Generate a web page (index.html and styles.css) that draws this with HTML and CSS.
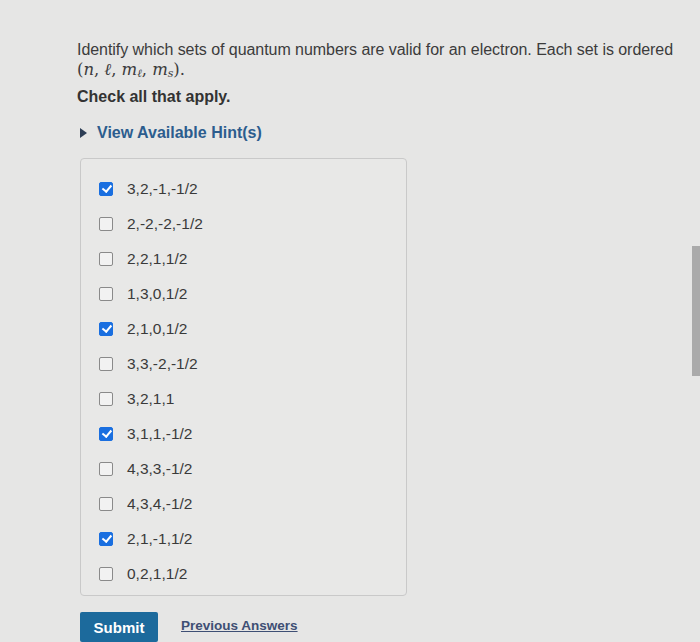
FILE: index.html
```html
<!DOCTYPE html>
<html>
<head>
<meta charset="utf-8">
<link rel="stylesheet" href="styles.css">
</head>
<body>
<div class="page">
  <div class="content">
    <p class="question">Identify which sets of quantum numbers are valid for an electron. Each set is ordered <span class="math">(<i>n</i>, <i>ℓ</i>, <i>m</i><sub><i>ℓ</i></sub>, <i>m</i><sub><i>s</i></sub>).</span></p>
    <p class="instr">Check all that apply.</p>
    <div class="hint"><span class="tri"></span><span class="hint-text">View Available Hint(s)</span></div>
    <div class="box">
      <label class="opt"><span class="cb on"></span><span>3,2,-1,-1/2</span></label>
      <label class="opt"><span class="cb"></span><span>2,-2,-2,-1/2</span></label>
      <label class="opt"><span class="cb"></span><span>2,2,1,1/2</span></label>
      <label class="opt"><span class="cb"></span><span>1,3,0,1/2</span></label>
      <label class="opt"><span class="cb on"></span><span>2,1,0,1/2</span></label>
      <label class="opt"><span class="cb"></span><span>3,3,-2,-1/2</span></label>
      <label class="opt"><span class="cb"></span><span>3,2,1,1</span></label>
      <label class="opt"><span class="cb on"></span><span>3,1,1,-1/2</span></label>
      <label class="opt"><span class="cb"></span><span>4,3,3,-1/2</span></label>
      <label class="opt"><span class="cb"></span><span>4,3,4,-1/2</span></label>
      <label class="opt"><span class="cb on"></span><span>2,1,-1,1/2</span></label>
      <label class="opt"><span class="cb"></span><span>0,2,1,1/2</span></label>
    </div>
    <div class="actions">
      <button class="submit">Submit</button>
      <a class="prev">Previous Answers</a>
    </div>
  </div>
  <div class="scroll"></div>
</div>
</body>
</html>
```
FILE: styles.css
```css
html, body {
  margin: 0;
  padding: 0;
}
body {
  width: 700px;
  height: 642px;
  overflow: hidden;
  background: #e6e6e5;
  font-family: "Liberation Sans", Arial, sans-serif;
  color: #3c3c3c;
}
.page {
  position: relative;
  width: 700px;
  height: 642px;
}
.content {
  padding: 40px 0 0 77px;
  width: 600px;
}
.question {
  margin: 0;
  font-size: 16px;
  line-height: 20px;
  letter-spacing: -0.05px;
}
.math {
  font-family: "DejaVu Serif", "Liberation Serif", serif;
  font-size: 16.5px;
  white-space: nowrap;
}
.math sub {
  font-size: 11px;
  vertical-align: -2px;
  line-height: 0;
}
.instr {
  margin: 6px 0 0;
  font-size: 16px;
  font-weight: bold;
  line-height: 22px;
  color: #333;
}
.hint {
  display: flex;
  align-items: center;
  margin: 14px 0 0 3px;
  height: 22px;
}
.tri {
  width: 0;
  height: 0;
  border-left: 7px solid #2d3e55;
  border-top: 5px solid transparent;
  border-bottom: 5px solid transparent;
  margin-right: 10px;
}
.hint-text {
  font-size: 16px;
  font-weight: bold;
  color: #2c5d8e;
}
.box {
  margin: 14px 0 0 3px;
  width: 327px;
  box-sizing: border-box;
  border: 1px solid #c9c9c9;
  border-radius: 4px;
  padding: 12px 0 4px 18px;
  display: flex;
  flex-direction: column;
  background: #e8e8e7;
}
.opt {
  display: flex;
  align-items: center;
  height: 35px;
  font-size: 15.5px;
  color: #3a3a3a;
}
.cb {
  width: 12px;
  height: 12px;
  border: 1.5px solid #8a8a8a;
  border-radius: 2px;
  background: #f2f2f2;
  margin-right: 14px;
  position: relative;
  flex: none;
}
.cb.on {
  background: #1a6fe0;
  border-color: #1a6fe0;
}
.cb.on::after {
  content: "";
  position: absolute;
  left: 3.5px;
  top: 0.5px;
  width: 3.5px;
  height: 7px;
  border-right: 2px solid #fff;
  border-bottom: 2px solid #fff;
  transform: rotate(40deg);
}
.actions {
  display: flex;
  align-items: center;
  margin: 16px 0 0 3px;
  gap: 23px;
}
.submit {
  width: 78px;
  height: 30px;
  border: none;
  border-radius: 2px;
  background: #1c6a9c;
  color: #fff;
  font-family: "Liberation Sans", Arial, sans-serif;
  font-size: 15px;
  font-weight: bold;
  padding: 0;
}
.prev {
  font-size: 13.5px;
  font-weight: bold;
  color: #3e4f74;
  text-decoration: underline;
  margin-top: -4px;
}
.scroll {
  position: absolute;
  right: 0;
  top: 246px;
  width: 8px;
  height: 130px;
  background: #aaaaaa;
}
```
